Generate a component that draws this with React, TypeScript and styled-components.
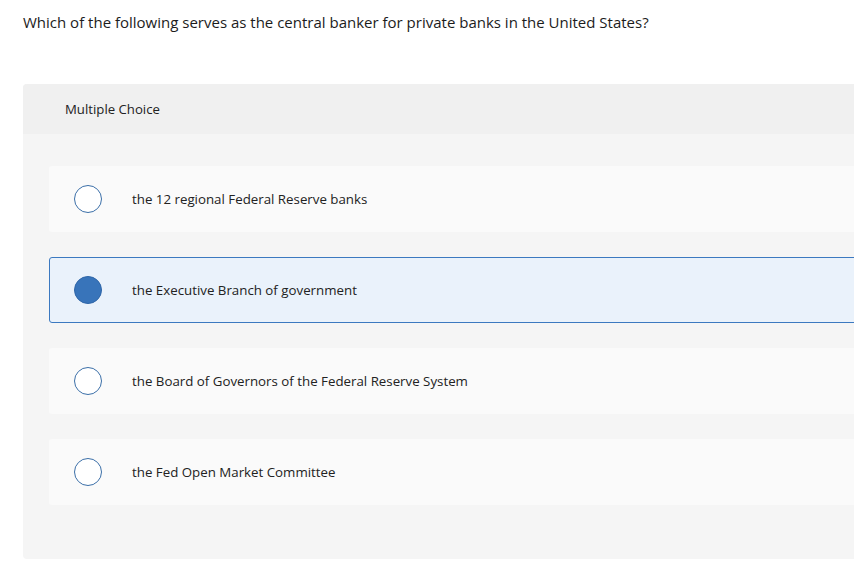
import React from "react";
import styled, { createGlobalStyle } from "styled-components";

const Global = createGlobalStyle`
  html, body { margin: 0; padding: 0; background: #ffffff; overflow: hidden; }
  body { font-family: "Open Sans", "Liberation Sans", Arial, sans-serif; color: #222; }
`;

const Page = styled.div`
  width: 854px;
  height: 579px;
  overflow: hidden;
  padding: 12px 0 0 23px;
  box-sizing: border-box;
`;

const Question = styled.div`
  font-size: 15px;
  line-height: 21px;
  color: #1c1c1c;
  white-space: nowrap;
`;

const Panel = styled.div`
  margin-top: 51px;
  width: 860px;
  background: #f5f5f5;
  border-radius: 4px;
  padding-bottom: 54px;
`;

const Header = styled.div`
  height: 50px;
  background: #f0f0f0;
  border-radius: 4px 4px 0 0;
  display: flex;
  align-items: center;
  padding-left: 42px;
  font-size: 13.2px;
  color: #222;
`;

const Options = styled.div`
  display: flex;
  flex-direction: column;
  gap: 25px;
  padding: 32px 0 0 26px;
`;

const Option = styled.div<{ $selected?: boolean }>`
  height: 66px;
  box-sizing: border-box;
  display: flex;
  align-items: center;
  background: ${(p) => (p.$selected ? "#eaf2fb" : "#fafafa")};
  border: 1px solid ${(p) => (p.$selected ? "#3c79c0" : "transparent")};
  border-radius: 3px;
  padding-left: 24px;
`;

const Radio = styled.span<{ $selected?: boolean }>`
  width: 28px;
  height: 28px;
  box-sizing: border-box;
  border-radius: 50%;
  border: 1.5px solid ${(p) => (p.$selected ? "#2f66a8" : "#3b6fa8")};
  background: ${(p) => (p.$selected ? "#3874ba" : "#ffffff")};
  flex: none;
`;

const Label = styled.span`
  margin-left: 30px;
  font-size: 13.3px;
  color: #222;
  white-space: nowrap;
`;

const choices = [
  "the 12 regional Federal Reserve banks",
  "the Executive Branch of government",
  "the Board of Governors of the Federal Reserve System",
  "the Fed Open Market Committee",
];

export default function App() {
  const selected = 1;
  return (
    <>
      <Global />
      <Page>
        <Question>
          Which of the following serves as the central banker for private banks in the United States?
        </Question>
        <Panel>
          <Header>Multiple Choice</Header>
          <Options>
            {choices.map((c, i) => (
              <Option key={c} $selected={i === selected}>
                <Radio $selected={i === selected} />
                <Label>{c}</Label>
              </Option>
            ))}
          </Options>
        </Panel>
      </Page>
    </>
  );
}
